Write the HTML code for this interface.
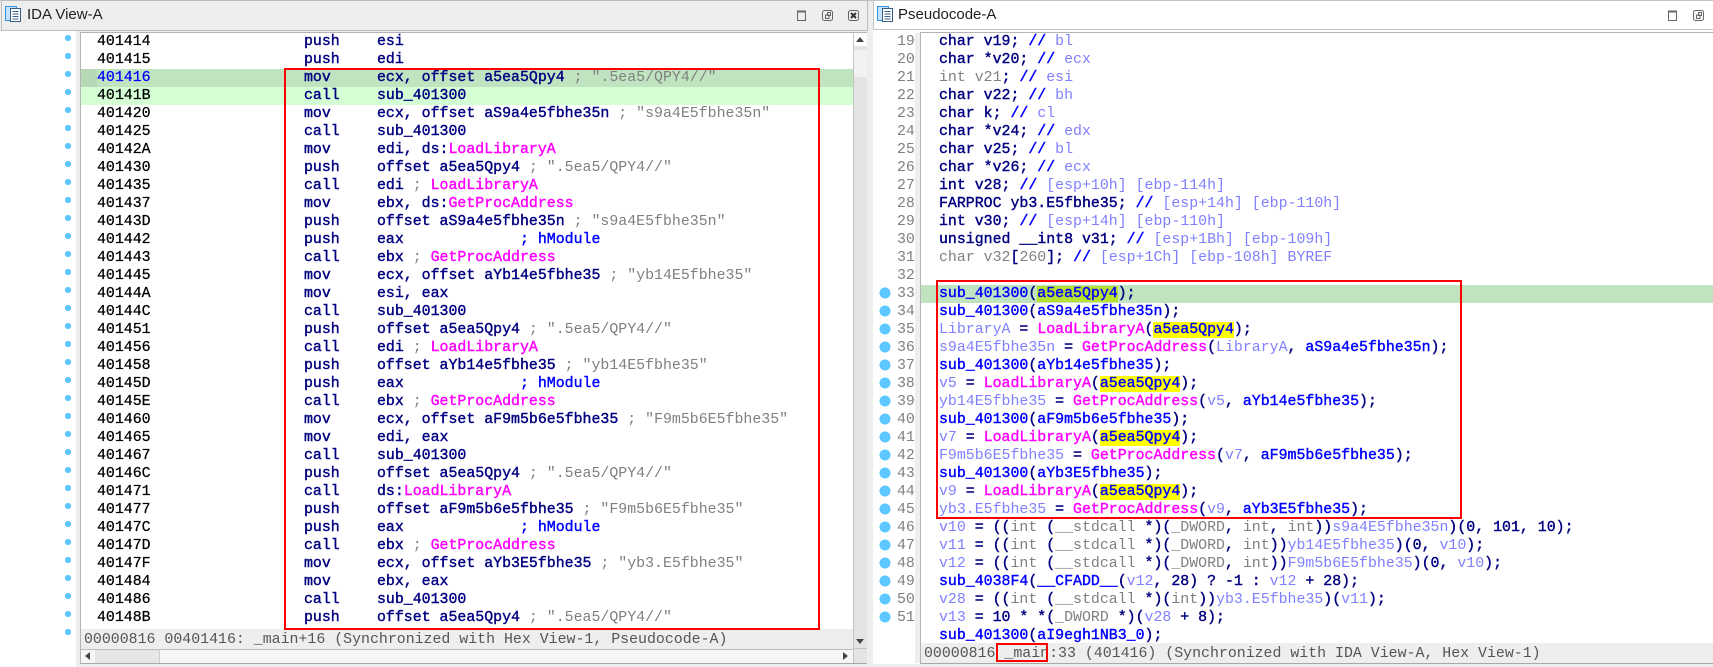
<!DOCTYPE html>
<html><head><meta charset="utf-8"><style>
html,body{margin:0;padding:0}
body{width:1713px;height:667px;overflow:hidden;background:#eee;position:relative;font-family:"Liberation Mono",monospace;font-size:14.9px}
.abs{position:absolute}
.r{height:18px;line-height:18px;white-space:pre;position:relative}
.r>*{position:absolute;top:0}
.a{left:16px;color:#000;-webkit-text-stroke:.25px}
.m{left:223px;color:#000080;-webkit-text-stroke:.4px}
.o{left:296px;color:#000080;-webkit-text-stroke:.4px}
.o i{font-style:normal}
.g{color:#808080;font-weight:normal;-webkit-text-stroke:0}
.p{color:#ff00ff;-webkit-text-stroke:.4px}
.b{color:#0000ff}
.n{color:#000080;-webkit-text-stroke:.4px}
.l{color:#8080ff;font-weight:normal;-webkit-text-stroke:0}
.bb{color:#0000ff;-webkit-text-stroke:.4px}
.y{background:#ffff00}
.c{left:18px;color:#000080;-webkit-text-stroke:.4px}
.red{position:absolute;border:2px solid #ff0000;box-sizing:border-box;pointer-events:none}
.num{position:absolute;left:897px;color:#808080;white-space:pre;line-height:18px;top:33px}
.title{font-family:"Liberation Sans",sans-serif;font-size:15px;color:#222;position:absolute;top:5px;line-height:20px}
.st{position:absolute;color:#555;white-space:pre;line-height:20px}
</style></head><body>
<div class="abs" style="left:0;top:0;width:1713px;height:1px;background:#c4c4c4"></div>
<!-- left title -->
<div class="abs" style="left:1px;top:0;width:865px;height:29px;background:#eee;border:1px solid #bcbcbc"></div>
<div class="abs" style="left:0;top:31px;width:76px;height:636px;background:#fff"></div>
<div class="abs" style="left:65px;top:33px;width:6px;height:602px;background:radial-gradient(circle 3.2px at 3px 5px,#5cc8ff 96%,transparent) 0 0/6px 18px repeat-y"></div>
<svg class="abs" style="left:4px;top:5px" width="18" height="18"><rect x="1.5" y="1.5" width="11" height="14" fill="#c4e2fa" stroke="#3b93e0"/><rect x="6.5" y="3.5" width="10" height="13" fill="#fff" stroke="#3a5c88"/><path d="M8.5 6.5h6M8.5 9h6M8.5 11.5h6M8.5 14h6" stroke="#3a5c88"/></svg>
<div class="title" style="left:27px">IDA View-A</div>
<svg class="abs" style="left:790px;top:6px" width="72" height="20" fill="none" stroke="#666"><rect x="7.5" y="5.5" width="8" height="9" stroke-width="1"/><path d="M7 5.5h9" stroke-width="2"/><rect x="32.5" y="4.5" width="10" height="10" rx="2"/><rect x="37.5" y="6.5" width="3" height="3"/><rect x="35.5" y="9" width="3.5" height="3.5"/><rect x="58.5" y="4.5" width="10" height="10" rx="2"/><path d="M61 7l5 5M66 7l-5 5" stroke="#333" stroke-width="2"/></svg>
<!-- left view -->
<div class="abs" style="left:80px;top:32px;width:787px;height:632px;background:#fff;border-left:1px solid #b4b4b4;border-top:1px solid #b4b4b4;border-right:1px solid #b4b4b4;border-bottom:1px solid #a8a8a8;box-sizing:border-box"></div>
<div class="abs" style="left:81px;top:33px;width:772px;height:596px;overflow:hidden;background:#fff">
<div class="abs" style="left:0;top:36px;width:772px;height:18px;background:#c0e4c0"></div>
<div class="abs" style="left:0;top:36px;width:16px;height:18px;background:#b6d8b6"></div>
<div class="abs" style="left:0;top:54px;width:772px;height:18px;background:#d4fed4"></div>
<div class="r"><span class="a">401414</span><span class="m">push</span><span class="o">esi</span></div>
<div class="r"><span class="a">401415</span><span class="m">push</span><span class="o">edi</span></div>
<div class="r"><span class="a b">401416</span><span class="m">mov</span><span class="o">ecx, offset a5ea5Qpy4 <i class="g">; ".5ea5/QPY4//"</i></span></div>
<div class="r"><span class="a">40141B</span><span class="m">call</span><span class="o">sub_401300</span></div>
<div class="r"><span class="a">401420</span><span class="m">mov</span><span class="o">ecx, offset aS9a4e5fbhe35n <i class="g">; "s9a4E5fbhe35n"</i></span></div>
<div class="r"><span class="a">401425</span><span class="m">call</span><span class="o">sub_401300</span></div>
<div class="r"><span class="a">40142A</span><span class="m">mov</span><span class="o">edi, ds:<i class="p">LoadLibraryA</i></span></div>
<div class="r"><span class="a">401430</span><span class="m">push</span><span class="o">offset a5ea5Qpy4 <i class="g">; ".5ea5/QPY4//"</i></span></div>
<div class="r"><span class="a">401435</span><span class="m">call</span><span class="o">edi <i class="g">;</i> <i class="p">LoadLibraryA</i></span></div>
<div class="r"><span class="a">401437</span><span class="m">mov</span><span class="o">ebx, ds:<i class="p">GetProcAddress</i></span></div>
<div class="r"><span class="a">40143D</span><span class="m">push</span><span class="o">offset aS9a4e5fbhe35n <i class="g">; "s9a4E5fbhe35n"</i></span></div>
<div class="r"><span class="a">401442</span><span class="m">push</span><span class="o">eax             <i class="b">; hModule</i></span></div>
<div class="r"><span class="a">401443</span><span class="m">call</span><span class="o">ebx <i class="g">;</i> <i class="p">GetProcAddress</i></span></div>
<div class="r"><span class="a">401445</span><span class="m">mov</span><span class="o">ecx, offset aYb14e5fbhe35 <i class="g">; "yb14E5fbhe35"</i></span></div>
<div class="r"><span class="a">40144A</span><span class="m">mov</span><span class="o">esi, eax</span></div>
<div class="r"><span class="a">40144C</span><span class="m">call</span><span class="o">sub_401300</span></div>
<div class="r"><span class="a">401451</span><span class="m">push</span><span class="o">offset a5ea5Qpy4 <i class="g">; ".5ea5/QPY4//"</i></span></div>
<div class="r"><span class="a">401456</span><span class="m">call</span><span class="o">edi <i class="g">;</i> <i class="p">LoadLibraryA</i></span></div>
<div class="r"><span class="a">401458</span><span class="m">push</span><span class="o">offset aYb14e5fbhe35 <i class="g">; "yb14E5fbhe35"</i></span></div>
<div class="r"><span class="a">40145D</span><span class="m">push</span><span class="o">eax             <i class="b">; hModule</i></span></div>
<div class="r"><span class="a">40145E</span><span class="m">call</span><span class="o">ebx <i class="g">;</i> <i class="p">GetProcAddress</i></span></div>
<div class="r"><span class="a">401460</span><span class="m">mov</span><span class="o">ecx, offset aF9m5b6e5fbhe35 <i class="g">; "F9m5b6E5fbhe35"</i></span></div>
<div class="r"><span class="a">401465</span><span class="m">mov</span><span class="o">edi, eax</span></div>
<div class="r"><span class="a">401467</span><span class="m">call</span><span class="o">sub_401300</span></div>
<div class="r"><span class="a">40146C</span><span class="m">push</span><span class="o">offset a5ea5Qpy4 <i class="g">; ".5ea5/QPY4//"</i></span></div>
<div class="r"><span class="a">401471</span><span class="m">call</span><span class="o">ds:<i class="p">LoadLibraryA</i></span></div>
<div class="r"><span class="a">401477</span><span class="m">push</span><span class="o">offset aF9m5b6e5fbhe35 <i class="g">; "F9m5b6E5fbhe35"</i></span></div>
<div class="r"><span class="a">40147C</span><span class="m">push</span><span class="o">eax             <i class="b">; hModule</i></span></div>
<div class="r"><span class="a">40147D</span><span class="m">call</span><span class="o">ebx <i class="g">;</i> <i class="p">GetProcAddress</i></span></div>
<div class="r"><span class="a">40147F</span><span class="m">mov</span><span class="o">ecx, offset aYb3E5fbhe35 <i class="g">; "yb3.E5fbhe35"</i></span></div>
<div class="r"><span class="a">401484</span><span class="m">mov</span><span class="o">ebx, eax</span></div>
<div class="r"><span class="a">401486</span><span class="m">call</span><span class="o">sub_401300</span></div>
<div class="r"><span class="a">40148B</span><span class="m">push</span><span class="o">offset a5ea5Qpy4 <i class="g">; ".5ea5/QPY4//"</i></span></div>
</div>
<!-- left status -->
<div class="abs" style="left:81px;top:629px;width:772px;height:20px;background:#eee"></div>
<div class="st" style="left:84px;top:630px">00000816 00401416: _main+16 (Synchronized with Hex View-1, Pseudocode-A)</div>
<!-- hscroll -->
<div class="abs" style="left:81px;top:649px;width:772px;height:14px;background:#f6f6f6;border-top:1px solid #bbb;box-sizing:border-box"></div>
<div class="abs" style="left:95px;top:650px;width:65px;height:13px;background:#e6e6e6;border-right:1px solid #ccc;box-sizing:border-box"></div>
<div class="abs" style="left:85px;top:652px;width:0;height:0;border:4px solid transparent;border-right:5px solid #444;border-left:0"></div>
<div class="abs" style="left:843px;top:652px;width:0;height:0;border:4px solid transparent;border-left:5px solid #444;border-right:0"></div>
<!-- vscroll -->
<div class="abs" style="left:853px;top:33px;width:14px;height:630px;background:#e4e4e4;border-left:1px solid #c4c4c4;box-sizing:border-box"></div>
<div class="abs" style="left:854px;top:33px;width:13px;height:13px;background:#fff"></div>
<div class="abs" style="left:856px;top:37px;width:0;height:0;border:4px solid transparent;border-bottom:5px solid #444;border-top:0"></div>
<div class="abs" style="left:854px;top:50px;width:13px;height:27px;background:#f2f2f2"></div>
<div class="abs" style="left:856px;top:639px;width:0;height:0;border:4px solid transparent;border-top:5px solid #444;border-bottom:0"></div>
<div class="abs" style="left:853px;top:648px;width:14px;height:1px;background:#c4c4c4"></div>
<!-- right title -->
<div class="abs" style="left:873px;top:1px;width:840px;height:28px;background:#fff"></div>
<div class="abs" style="left:873px;top:29px;width:840px;height:1px;background:#c4c4c4"></div>
<div class="abs" style="left:873px;top:0;width:1px;height:30px;background:#c4c4c4"></div>
<svg class="abs" style="left:876px;top:5px" width="18" height="18"><rect x="1.5" y="1.5" width="11" height="14" fill="#c4e2fa" stroke="#3b93e0"/><rect x="6.5" y="3.5" width="10" height="13" fill="#fff" stroke="#3a5c88"/><path d="M8.5 6.5h6M8.5 9h6M8.5 11.5h6M8.5 14h6" stroke="#3a5c88"/></svg>
<div class="title" style="left:898px">Pseudocode-A</div>
<svg class="abs" style="left:1661px;top:6px" width="50" height="20" fill="none" stroke="#666"><rect x="7.5" y="5.5" width="8" height="9"/><path d="M7 5.5h9" stroke-width="2"/><rect x="32.5" y="4.5" width="10" height="10" rx="2"/><rect x="37.5" y="6.5" width="3" height="3"/><rect x="35.5" y="9" width="3.5" height="3.5"/></svg>
<!-- right view -->
<div class="abs" style="left:873px;top:30px;width:840px;height:634px;background:#fff"></div>
<div class="abs" style="left:915px;top:33px;width:5px;height:630px;background:#eee"></div>
<div class="abs" style="left:920px;top:32px;width:793px;height:1px;background:#b4b4b4"></div>
<div class="abs" style="left:920px;top:32px;width:1px;height:632px;background:#b4b4b4"></div>
<div class="abs" style="left:879px;top:285px;width:12px;height:342px;background:radial-gradient(circle 5.6px at 6px 8px,#5cc8ff 96%,transparent) 0 0/12px 18px repeat-y"></div>
<div class="num">19
20
21
22
23
24
25
26
27
28
29
30
31
32
33
34
35
36
37
38
39
40
41
42
43
44
45
46
47
48
49
50
51</div>
<div class="abs" style="left:921px;top:33px;width:792px;height:610px;overflow:hidden">
<div class="abs" style="left:0;top:252px;width:792px;height:18px;background:#c0e4c0"></div>
<div class="r"><span class="c">char v19; <i class="bb" style="font-style:normal">//</i> <i class="l" style="font-style:normal">bl</i></span></div>
<div class="r"><span class="c">char *v20; <i class="bb" style="font-style:normal">//</i> <i class="l" style="font-style:normal">ecx</i></span></div>
<div class="r"><span class="c"><span class="g">int v21</span>; <i class="bb" style="font-style:normal">//</i> <i class="l" style="font-style:normal">esi</i></span></div>
<div class="r"><span class="c">char v22; <i class="bb" style="font-style:normal">//</i> <i class="l" style="font-style:normal">bh</i></span></div>
<div class="r"><span class="c">char k; <i class="bb" style="font-style:normal">//</i> <i class="l" style="font-style:normal">cl</i></span></div>
<div class="r"><span class="c">char *v24; <i class="bb" style="font-style:normal">//</i> <i class="l" style="font-style:normal">edx</i></span></div>
<div class="r"><span class="c">char v25; <i class="bb" style="font-style:normal">//</i> <i class="l" style="font-style:normal">bl</i></span></div>
<div class="r"><span class="c">char *v26; <i class="bb" style="font-style:normal">//</i> <i class="l" style="font-style:normal">ecx</i></span></div>
<div class="r"><span class="c">int v28; <i class="bb" style="font-style:normal">//</i> <i class="l" style="font-style:normal">[esp+10h] [ebp-114h]</i></span></div>
<div class="r"><span class="c">FARPROC yb3.E5fbhe35; <i class="bb" style="font-style:normal">//</i> <i class="l" style="font-style:normal">[esp+14h] [ebp-110h]</i></span></div>
<div class="r"><span class="c">int v30; <i class="bb" style="font-style:normal">//</i> <i class="l" style="font-style:normal">[esp+14h] [ebp-110h]</i></span></div>
<div class="r"><span class="c">unsigned __int8 v31; <i class="bb" style="font-style:normal">//</i> <i class="l" style="font-style:normal">[esp+1Bh] [ebp-109h]</i></span></div>
<div class="r"><span class="c"><span class="g">char v32</span>[<span class="g">260</span>]; <i class="bb" style="font-style:normal">//</i> <i class="l" style="font-style:normal">[esp+1Ch] [ebp-108h] BYREF</i></span></div>
<div class="r"></div>
<div class="r"><span class="c"><span class="bb">sub_401300</span>(<span class="bb" style="background:#b8e030">a5ea5Qpy4</span>);</span></div>
<div class="r"><span class="c"><span class="bb">sub_401300</span>(<span class="bb">aS9a4e5fbhe35n</span>);</span></div>
<div class="r"><span class="c"><span class="l">LibraryA</span> = <span class="p">LoadLibraryA</span>(<span class="bb y">a5ea5Qpy4</span>);</span></div>
<div class="r"><span class="c"><span class="l">s9a4E5fbhe35n</span> = <span class="p">GetProcAddress</span>(<span class="l">LibraryA</span>, <span class="bb">aS9a4e5fbhe35n</span>);</span></div>
<div class="r"><span class="c"><span class="bb">sub_401300</span>(<span class="bb">aYb14e5fbhe35</span>);</span></div>
<div class="r"><span class="c"><span class="l">v5</span> = <span class="p">LoadLibraryA</span>(<span class="bb y">a5ea5Qpy4</span>);</span></div>
<div class="r"><span class="c"><span class="l">yb14E5fbhe35</span> = <span class="p">GetProcAddress</span>(<span class="l">v5</span>, <span class="bb">aYb14e5fbhe35</span>);</span></div>
<div class="r"><span class="c"><span class="bb">sub_401300</span>(<span class="bb">aF9m5b6e5fbhe35</span>);</span></div>
<div class="r"><span class="c"><span class="l">v7</span> = <span class="p">LoadLibraryA</span>(<span class="bb y">a5ea5Qpy4</span>);</span></div>
<div class="r"><span class="c"><span class="l">F9m5b6E5fbhe35</span> = <span class="p">GetProcAddress</span>(<span class="l">v7</span>, <span class="bb">aF9m5b6e5fbhe35</span>);</span></div>
<div class="r"><span class="c"><span class="bb">sub_401300</span>(<span class="bb">aYb3E5fbhe35</span>);</span></div>
<div class="r"><span class="c"><span class="l">v9</span> = <span class="p">LoadLibraryA</span>(<span class="bb y">a5ea5Qpy4</span>);</span></div>
<div class="r"><span class="c"><span class="l">yb3.E5fbhe35</span> = <span class="p">GetProcAddress</span>(<span class="l">v9</span>, <span class="bb">aYb3E5fbhe35</span>);</span></div>
<div class="r"><span class="c"><span class="l">v10</span> = ((<span class="g">int</span> (<span class="g">__stdcall</span> *)(<span class="g">_DWORD</span>, <span class="g">int</span>, <span class="g">int</span>))<span class="l">s9a4E5fbhe35n</span>)(0, 101, 10);</span></div>
<div class="r"><span class="c"><span class="l">v11</span> = ((<span class="g">int</span> (<span class="g">__stdcall</span> *)(<span class="g">_DWORD</span>, <span class="g">int</span>))<span class="l">yb14E5fbhe35</span>)(0, <span class="l">v10</span>);</span></div>
<div class="r"><span class="c"><span class="l">v12</span> = ((<span class="g">int</span> (<span class="g">__stdcall</span> *)(<span class="g">_DWORD</span>, <span class="g">int</span>))<span class="l">F9m5b6E5fbhe35</span>)(0, <span class="l">v10</span>);</span></div>
<div class="r"><span class="c"><span class="bb">sub_4038F4</span>(<span class="bb">__CFADD__</span>(<span class="l">v12</span>, 28) ? -1 : <span class="l">v12</span> + 28);</span></div>
<div class="r"><span class="c"><span class="l">v28</span> = ((<span class="g">int</span> (<span class="g">__stdcall</span> *)(<span class="g">int</span>))<span class="l">yb3.E5fbhe35</span>)(<span class="l">v11</span>);</span></div>
<div class="r"><span class="c"><span class="l">v13</span> = 10 * *(<span class="g">_DWORD</span> *)(<span class="l">v28</span> + 8);</span></div>
<div class="r"><span class="c"><span class="bb">sub_401300</span>(<span class="bb">aI9egh1NB3_0</span>);</span></div>
</div>
<!-- right status -->
<div class="abs" style="left:921px;top:643px;width:792px;height:20px;background:#eee"></div>
<div class="abs" style="left:920px;top:663px;width:793px;height:1px;background:#a8a8a8"></div>
<div class="st" style="left:924px;top:644px">00000816 _main:33 (401416) (Synchronized with IDA View-A, Hex View-1)</div>
<!-- annotations -->
<div class="red" style="left:284px;top:68px;width:536px;height:562px"></div>
<div class="red" style="left:936px;top:280px;width:526px;height:239px"></div>
<div class="red" style="left:996px;top:643px;width:52px;height:19px"></div>
</body></html>
